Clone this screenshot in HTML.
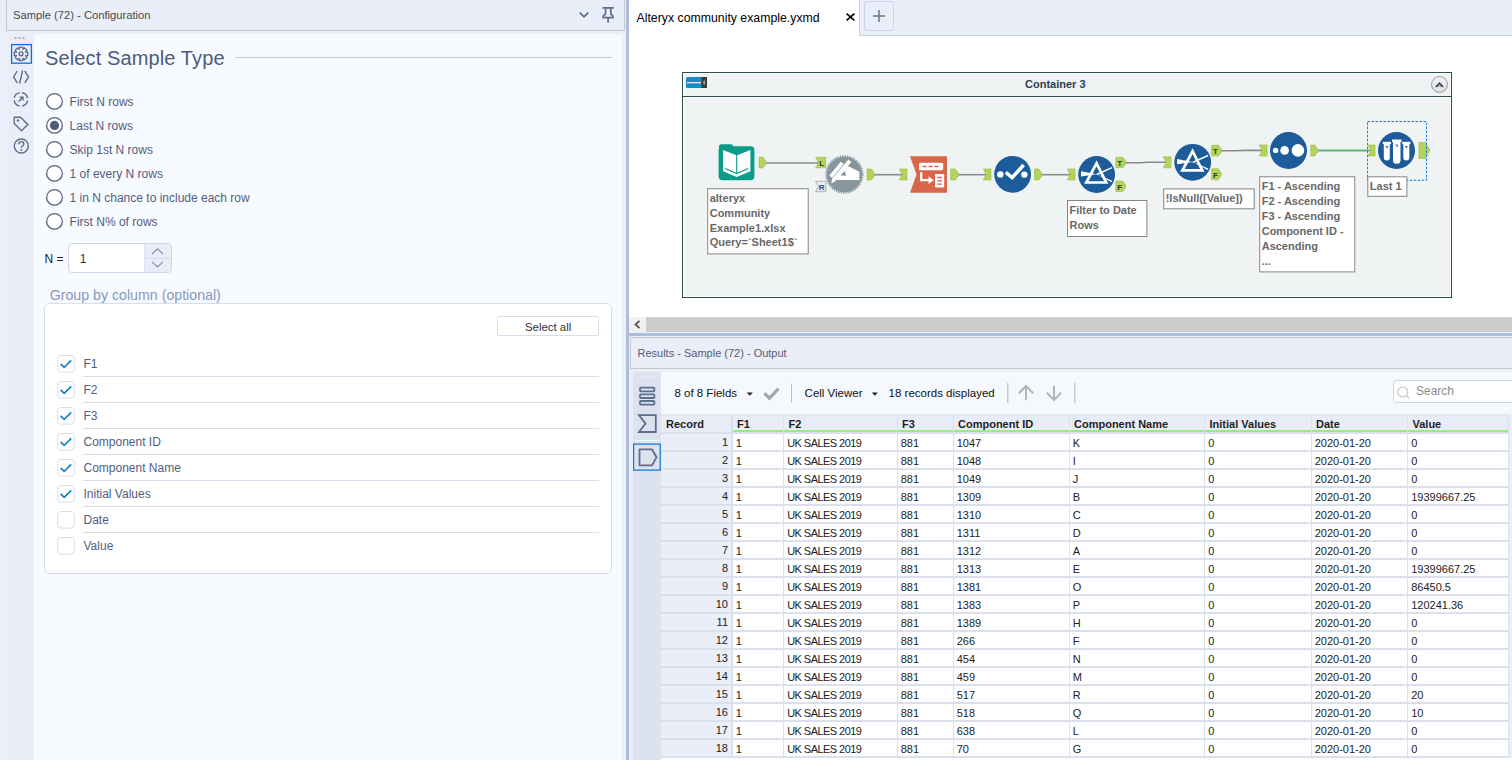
<!DOCTYPE html><html><head><meta charset="utf-8"><style>
html,body{margin:0;padding:0;width:1512px;height:760px;overflow:hidden;background:#e9eef8;font-family:"Liberation Sans",sans-serif;}
.t{position:absolute;white-space:nowrap;}
.r{position:absolute;box-sizing:border-box;}
svg{position:absolute;}
</style></head><body>

<div class="r" style="left:5px;top:31px;width:1px;height:729px;background:#f0f0f2;"></div>
<div class="r" style="left:6px;top:31px;width:28px;height:729px;background:#e9eef8;"></div>
<div class="r" style="left:33px;top:31px;width:1px;height:729px;background:#f0f0f2;"></div>
<div class="r" style="left:34px;top:34px;width:588px;height:726px;background:#f7faff;"></div>
<div class="r" style="left:622px;top:31px;width:4px;height:729px;background:#edf0f8;"></div>
<div class="r" style="left:6px;top:0px;width:619px;height:31px;background:#c8c8c8;"></div>
<div class="r" style="left:7px;top:0px;width:617px;height:30px;background:#e9eef8;"></div>
<div class="t" style="left:13.0px;top:9.00px;font-size:11.2px;line-height:12.88px;color:#4a4a4a;font-weight:400;">Sample (72) - Configuration</div>
<svg style="left:570px;top:0" width="56" height="30" viewBox="570 0 56 30"><polyline points="579.8,12.6 584,16.8 588.2,12.6" fill="none" stroke="#5f6e8c" stroke-width="1.8"/><path d="M602.5,7.8H613.8M605.5,8V13.8L603.2,16.2V17.6H613V16.2L610.8,13.8V8M608.1,17.6V22.7" fill="none" stroke="#5f6e8c" stroke-width="1.7"/></svg>
<svg style="left:6px;top:31px" width="28" height="130" viewBox="6 31 28 130"><g fill="#a8b0c0"><rect x="14.5" y="37" width="2" height="2"/><rect x="18.5" y="37" width="2" height="2"/><rect x="22.5" y="37" width="2" height="2"/></g><rect x="11.6" y="44.6" width="19.8" height="18.6" fill="none" stroke="#0b72d8" stroke-width="1.3"/><g fill="none" stroke="#5f6e8c" stroke-width="1.4"><path d="M25.62,51.76 L27.75,52.16 L27.75,55.44 L25.62,55.84 L25.72,55.59 L26.95,57.38 L24.63,59.70 L22.84,58.47 L23.09,58.37 L22.69,60.50 L19.41,60.50 L19.01,58.37 L19.26,58.47 L17.47,59.70 L15.15,57.38 L16.38,55.59 L16.48,55.84 L14.35,55.44 L14.35,52.16 L16.48,51.76 L16.38,52.01 L15.15,50.22 L17.47,47.90 L19.26,49.13 L19.01,49.23 L19.41,47.10 L22.69,47.10 L23.09,49.23 L22.84,49.13 L24.63,47.90 L26.95,50.22 L25.72,52.01Z" stroke-linejoin="round"/><circle cx="21.05" cy="53.8" r="1.9"/><path d="M17.2,71 13.6,76.9 17.2,82.8 M24.8,71 28.6,76.9 24.8,82.8 M22.6,70.5 19.6,83.5"/><circle cx="20.9" cy="99.4" r="6.8" stroke-dasharray="8.2 2.5" transform="rotate(-80 20.9 99.4)"/><path d="M18.6,101.6 22.8,97.4 M19.8,97.2 H23V100.4"/><path d="M14.2,117.2 H20.5 L27.8,124.5 21.5,130.8 14.2,123.5Z"/><circle cx="21.3" cy="146" r="7"/><path d="M18.8,144.2c0,-1.6 1.1,-2.6 2.5,-2.6s2.5,1 2.5,2.3c0,1.8 -2.4,1.9 -2.4,3.8"/></g><circle cx="18" cy="120.5" r="1.2" fill="#5f6e8c"/><circle cx="21.4" cy="150" r="1" fill="#5f6e8c"/></svg>
<div class="t" style="left:45.0px;top:47.00px;font-size:20px;line-height:23.00px;color:#4b5a7e;font-weight:400;letter-spacing:0.12px">Select Sample Type</div>
<div class="r" style="left:235px;top:57px;width:377px;height:1px;background:#c6c9cf;"></div>
<div class="t" style="left:69.6px;top:96.00px;font-size:12px;line-height:13.80px;color:#535d7e;font-weight:400;">First N rows</div>
<div class="t" style="left:69.6px;top:120.00px;font-size:12px;line-height:13.80px;color:#535d7e;font-weight:400;">Last N rows</div>
<div class="t" style="left:69.6px;top:144.00px;font-size:12px;line-height:13.80px;color:#535d7e;font-weight:400;">Skip 1st N rows</div>
<div class="t" style="left:69.6px;top:168.00px;font-size:12px;line-height:13.80px;color:#535d7e;font-weight:400;">1 of every N rows</div>
<div class="t" style="left:69.6px;top:192.00px;font-size:12px;line-height:13.80px;color:#535d7e;font-weight:400;">1 in N chance to include each row</div>
<div class="t" style="left:69.6px;top:216.00px;font-size:12px;line-height:13.80px;color:#535d7e;font-weight:400;">First N% of rows</div>
<svg style="left:40px;top:88px" width="30" height="145" viewBox="40 88 30 145"><circle cx="54.5" cy="101.4" r="7.8" fill="#fff" stroke="#56617c" stroke-width="1.3"/><circle cx="54.5" cy="125.4" r="7.8" fill="#fff" stroke="#56617c" stroke-width="1.3"/><circle cx="54.5" cy="125.4" r="4.6" fill="#4b5a7e"/><circle cx="54.5" cy="149.4" r="7.8" fill="#fff" stroke="#56617c" stroke-width="1.3"/><circle cx="54.5" cy="173.4" r="7.8" fill="#fff" stroke="#56617c" stroke-width="1.3"/><circle cx="54.5" cy="197.4" r="7.8" fill="#fff" stroke="#56617c" stroke-width="1.3"/><circle cx="54.5" cy="221.4" r="7.8" fill="#fff" stroke="#56617c" stroke-width="1.3"/></svg>
<div class="t" style="left:44.4px;top:253.00px;font-size:12px;line-height:13.80px;color:#222;font-weight:400;">N =</div>
<div class="r" style="left:68px;top:243px;width:104px;height:30px;border:1px solid #cfd8ea;border-radius:4px;background:#fff;overflow:hidden"><div class="r" style="left:75px;top:0;width:28px;height:28px;background:#e8edf7;border-left:1px solid #dde4f0"></div><div class="r" style="left:75px;top:14px;width:28px;height:1px;background:#d5dcea"></div></div>
<div class="t" style="left:79.7px;top:253.00px;font-size:12px;line-height:13.80px;color:#333;font-weight:400;">1</div>
<svg style="left:144px;top:244px" width="28" height="28" viewBox="144 244 28 28"><polyline points="152,254 157.5,248.8 163,254" fill="none" stroke="#8190ad" stroke-width="1.1"/><polyline points="152,261.8 157.5,267 163,261.8" fill="none" stroke="#8190ad" stroke-width="1.1"/></svg>
<div class="t" style="left:49.7px;top:287.00px;font-size:14.2px;line-height:16.33px;color:#8798bd;font-weight:400;">Group by column (optional)</div>
<div class="r" style="left:44px;top:303px;width:568px;height:271px;border:1px solid #d6deed;border-radius:5px;background:#fff"></div>
<div class="r" style="left:497px;top:316px;width:102px;height:20px;border:1px solid #d6deed;border-radius:2px;background:#fff"></div>
<div class="t" style="left:525.0px;top:321.00px;font-size:11.4px;line-height:13.11px;color:#333;font-weight:400;">Select all</div>
<div class="t" style="left:83.5px;top:358.00px;font-size:12px;line-height:13.80px;color:#535d7e;font-weight:400;">F1</div>
<div class="r" style="left:83px;top:376px;width:516px;height:1px;background:#d6deed;"></div>
<div class="t" style="left:83.5px;top:384.00px;font-size:12px;line-height:13.80px;color:#535d7e;font-weight:400;">F2</div>
<div class="r" style="left:83px;top:402px;width:516px;height:1px;background:#d6deed;"></div>
<div class="t" style="left:83.5px;top:410.00px;font-size:12px;line-height:13.80px;color:#535d7e;font-weight:400;">F3</div>
<div class="r" style="left:83px;top:428px;width:516px;height:1px;background:#d6deed;"></div>
<div class="t" style="left:83.5px;top:436.00px;font-size:12px;line-height:13.80px;color:#535d7e;font-weight:400;">Component ID</div>
<div class="r" style="left:83px;top:454px;width:516px;height:1px;background:#d6deed;"></div>
<div class="t" style="left:83.5px;top:462.00px;font-size:12px;line-height:13.80px;color:#535d7e;font-weight:400;">Component Name</div>
<div class="r" style="left:83px;top:480px;width:516px;height:1px;background:#d6deed;"></div>
<div class="t" style="left:83.5px;top:488.00px;font-size:12px;line-height:13.80px;color:#535d7e;font-weight:400;">Initial Values</div>
<div class="r" style="left:83px;top:506px;width:516px;height:1px;background:#d6deed;"></div>
<div class="t" style="left:83.5px;top:514.00px;font-size:12px;line-height:13.80px;color:#535d7e;font-weight:400;">Date</div>
<div class="r" style="left:83px;top:532px;width:516px;height:1px;background:#d6deed;"></div>
<div class="t" style="left:83.5px;top:540.00px;font-size:12px;line-height:13.80px;color:#535d7e;font-weight:400;">Value</div>
<svg style="left:50px;top:350px" width="30" height="210" viewBox="50 350 30 210"><rect x="57.7" y="355.5" width="16.6" height="16.6" rx="3" fill="#fff" stroke="#d6deed" stroke-width="1"/><polyline points="60.6,363.8 64.2,367.4 71.2,360.4" fill="none" stroke="#1a7fc8" stroke-width="1.7"/><rect x="57.7" y="381.5" width="16.6" height="16.6" rx="3" fill="#fff" stroke="#d6deed" stroke-width="1"/><polyline points="60.6,389.8 64.2,393.4 71.2,386.4" fill="none" stroke="#1a7fc8" stroke-width="1.7"/><rect x="57.7" y="407.5" width="16.6" height="16.6" rx="3" fill="#fff" stroke="#d6deed" stroke-width="1"/><polyline points="60.6,415.8 64.2,419.4 71.2,412.4" fill="none" stroke="#1a7fc8" stroke-width="1.7"/><rect x="57.7" y="433.5" width="16.6" height="16.6" rx="3" fill="#fff" stroke="#d6deed" stroke-width="1"/><polyline points="60.6,441.8 64.2,445.4 71.2,438.4" fill="none" stroke="#1a7fc8" stroke-width="1.7"/><rect x="57.7" y="459.5" width="16.6" height="16.6" rx="3" fill="#fff" stroke="#d6deed" stroke-width="1"/><polyline points="60.6,467.8 64.2,471.4 71.2,464.4" fill="none" stroke="#1a7fc8" stroke-width="1.7"/><rect x="57.7" y="485.5" width="16.6" height="16.6" rx="3" fill="#fff" stroke="#d6deed" stroke-width="1"/><polyline points="60.6,493.8 64.2,497.4 71.2,490.4" fill="none" stroke="#1a7fc8" stroke-width="1.7"/><rect x="57.7" y="511.5" width="16.6" height="16.6" rx="3" fill="#fff" stroke="#d6deed" stroke-width="1"/><rect x="57.7" y="537.5" width="16.6" height="16.6" rx="3" fill="#fff" stroke="#d6deed" stroke-width="1"/></svg>
<div class="r" style="left:625px;top:31px;width:1px;height:729px;background:#f2f2f4;"></div>
<div class="r" style="left:626px;top:0px;width:3px;height:760px;background:#adbde0;"></div>
<div class="r" style="left:629px;top:0px;width:883px;height:317px;background:#ffffff;"></div>
<div class="r" style="left:859px;top:0px;width:653px;height:36px;background:#c8d3e8;"></div>
<div class="r" style="left:860px;top:0px;width:652px;height:35px;background:#e9eef8;"></div>
<div class="t" style="left:636.5px;top:11.00px;font-size:12.3px;line-height:14.14px;color:#000;font-weight:400;">Alteryx community example.yxmd</div>
<svg style="left:840px;top:8px" width="20" height="20" viewBox="840 8 20 20"><path d="M846.6,13.6 854.4,20.4 M854.4,13.6 846.6,20.4" stroke="#000" stroke-width="1.7" fill="none"/></svg>
<div class="r" style="left:864px;top:1px;width:30px;height:30px;border:1px solid #cbd5e8;border-radius:3px;background:#e9eef8"></div>
<svg style="left:864px;top:1px" width="30" height="30" viewBox="864 1 30 30"><path d="M873,16H885M879,10V22" stroke="#6a7690" stroke-width="1.5" fill="none"/></svg>
<div class="r" style="left:682px;top:72px;width:770px;height:226px;border:1px solid #2f4b4b;background:#eff3f4;box-shadow:inset 0 0 0 1px #fff"></div>
<div class="r" style="left:683px;top:96px;width:768px;height:1px;background:#2f4b4b;"></div>
<div class="r" style="left:683px;top:97px;width:768px;height:1px;background:#fff;"></div>
<div class="t" style="left:1025.0px;top:78.00px;font-size:11px;line-height:12.65px;color:#2b3f52;font-weight:700;">Container 3</div>
<svg style="left:684px;top:74px" width="30" height="20" viewBox="684 74 30 20"><rect x="686" y="77" width="21" height="11" rx="1.5" fill="#1a8ac6"/><rect x="701.5" y="77" width="5.5" height="11" fill="#3a3a3a"/><rect x="687" y="82" width="14" height="1.3" fill="#e8e8e8"/><path d="M704.2,79.5 705.2,82.5 704.2,85.5 703.2,82.5z" fill="#aaa"/></svg>
<svg style="left:1428px;top:74px" width="22" height="22" viewBox="1428 74 22 22"><defs><linearGradient id="cg" x1="0" y1="0" x2="0" y2="1"><stop offset="0" stop-color="#f4f5f8"/><stop offset="1" stop-color="#d9dde6"/></linearGradient></defs><circle cx="1439.5" cy="84.5" r="8" fill="url(#cg)" stroke="#9a9a9a" stroke-width="1"/><path d="M1435.9,87 1439.5,83 1443.1,87" stroke="#333" stroke-width="1.2" fill="none"/><path d="M1437.6,86.9 1439.5,84.9 1441.4,86.9" stroke="#555" stroke-width="1" fill="none"/></svg>
<svg style="left:629px;top:98px" width="830" height="199" viewBox="629 98 830 199"><path d="M766,163H819" stroke="#8a8a8a" stroke-width="1.6" fill="none"/><path d="M874,174.7H902" stroke="#8a8a8a" stroke-width="1.6" fill="none"/><path d="M958,174.7H986" stroke="#8a8a8a" stroke-width="1.6" fill="none"/><path d="M1042,174.7H1070" stroke="#8a8a8a" stroke-width="1.6" fill="none"/><path d="M1125,162.8H1140L1148,162.3H1166" stroke="#8a8a8a" stroke-width="1.6" fill="none"/><path d="M1221,150.8H1236L1244,150.4H1262" stroke="#8a8a8a" stroke-width="1.6" fill="none"/><path d="M1318,150.4H1371" stroke="#5cb870" stroke-width="2" fill="none"/><rect x="719" y="144.3" width="14" height="6" rx="2" fill="#0a9c8b"/><rect x="718.6" y="146.2" width="35.8" height="34" rx="4" fill="#0a9c8b"/><path d="M723.1,150 736.3,155.3H737.1L750.4,150V171.2L736.7,177L723.1,171.2Z" fill="#fff"/><path d="M736.7,155V173.6M725.3,168.6 736.7,173.6 748.2,168.6" stroke="#0a9c8b" stroke-width="1.1" fill="none"/><path d="M759,157.0H762.8L765.6,160.7Q766,162.5 765.6,164.3L762.8,168.0H759Z" fill="#b4d35a" stroke="#98b843" stroke-width="0.6"/><path d="M815.6,157.2H825.8V167.8H815.6L818.6,162.5Z" fill="#b4d35a" stroke="#98b843" stroke-width="0.6"/><text x="821.7" y="166.1" font-size="8" font-weight="700" text-anchor="middle" fill="#24402a" font-family="Liberation Sans">L</text><path d="M815.6,181.3H825.8V191.7H815.6L818.6,186.5Z" fill="#eeeeee" stroke="#8a8a8a" stroke-width="0.6"/><text x="821.7" y="190.1" font-size="8" font-weight="700" text-anchor="middle" fill="#1d4f8a" font-family="Liberation Sans">R</text><circle cx="844.4" cy="174.5" r="17.8" fill="#87969c"/><circle cx="844.4" cy="174.5" r="18.4" fill="none" stroke="#87969c" stroke-width="1.6" stroke-dasharray="1.3 1.1"/><path d="M831.2,183.5 832.2,178.8 848.3,159.6 851.3,162.1 835.2,181.3Z" fill="#fff"/><path d="M829.3,175.6 840.8,161.8 843.6,164.1 832.1,177.9Z" fill="#fff"/><path d="M837,176.3 847.9,166.1 859.4,171.7V179.9H837Z" fill="#fff"/><path d="M840.5,175.5 844.5,171 846.2,175.8Z" fill="#87969c"/><path d="M867,169.0H871.3L874.1,172.7Q874.5,174.5 874.1,176.3L871.3,180.0H867Z" fill="#b4d35a" stroke="#98b843" stroke-width="0.6"/><path d="M899.3,169.0H907V180.0H899.3L902.3,174.5Z" fill="#b4d35a" stroke="#98b843" stroke-width="0.6"/><path d="M910,156.3H947V192.7H910L916.5,174.5Z" fill="#d9654b"/><rect x="919" y="162.8" width="24.2" height="7.4" rx="1.5" fill="#fff"/><path d="M922.6,166.5h4M928.6,166.5h4M934.6,166.5h4" stroke="#d9654b" stroke-width="1.6"/><path d="M921.2,172.2V180.2H929" stroke="#fff" stroke-width="2.2" fill="none"/><path d="M928.5,176.3 933.6,180.2 928.5,184.1Z" fill="#fff"/><rect x="935" y="173.9" width="9.2" height="13.7" rx="1.3" fill="#fff"/><path d="M937.2,177.5h4.8M937.2,180.8h4.8M937.2,184.1h4.8" stroke="#d9654b" stroke-width="1.3"/><path d="M950.7,169.0H955.3L958.1,172.7Q958.5,174.5 958.1,176.3L955.3,180.0H950.7Z" fill="#b4d35a" stroke="#98b843" stroke-width="0.6"/><path d="M983.2,169.0H991V180.0H983.2L986.2,174.5Z" fill="#b4d35a" stroke="#98b843" stroke-width="0.6"/><circle cx="1012.6" cy="174.3" r="18.4" fill="#1d5c9a"/><circle cx="1000.3" cy="174.4" r="3.2" fill="#fff"/><circle cx="1024.4" cy="174.6" r="3.2" fill="#fff"/><path d="M1005.8,172.3 1012.2,177.6 1023.6,165" stroke="#fff" stroke-width="3.6" fill="none"/><path d="M1034.5,169.0H1038.8L1041.6,172.7Q1042,174.5 1041.6,176.3L1038.8,180.0H1034.5Z" fill="#b4d35a" stroke="#98b843" stroke-width="0.6"/><path d="M1067.2,169.0H1075V180.0H1067.2L1070.2,174.5Z" fill="#b4d35a" stroke="#98b843" stroke-width="0.6"/><circle cx="1096.6" cy="174.5" r="18.4" fill="#1d5c9a"/><path d="M1096.5,163.3 L1086.3,182.5 H1106.1999999999998Z" fill="none" stroke="#fff" stroke-width="2.7" stroke-linejoin="miter" stroke-miterlimit="10"/><path d="M1081.0,171.2 L1096.5,174.3 L1081.0,176.5Z" fill="#fff"/><path d="M1096.6,174.5 L1112.0,167.7" stroke="#fff" stroke-width="1.4" fill="none"/><path d="M1096.6,174.2 L1112.1999999999998,180.7 L1111.6,182.3Z" fill="#fff"/><path d="M1115.8,157.3H1122.7L1125.5,160.7Q1125.9,162.5 1125.5,164.3L1122.7,167.7H1115.8Z" fill="#b4d35a" stroke="#98b843" stroke-width="0.6"/><text x="1119.8" y="166.1" font-size="8" font-weight="700" text-anchor="middle" fill="#24402a" font-family="Liberation Sans">T</text><path d="M1115.8,181.0H1122.7L1125.5,184.5Q1125.9,186.3 1125.5,188.10000000000002L1122.7,191.60000000000002H1115.8Z" fill="#b4d35a" stroke="#98b843" stroke-width="0.6"/><text x="1119.8" y="189.9" font-size="8" font-weight="700" text-anchor="middle" fill="#24402a" font-family="Liberation Sans">F</text><rect x="1067.5" y="200.5" width="79.40000000000009" height="36" fill="#fff" stroke="#858585" stroke-width="1"/><text x="1069.5" y="213.8" font-size="11" font-weight="700" fill="#686868" font-family="Liberation Sans">Filter to Date</text><text x="1069.5" y="228.6" font-size="11" font-weight="700" fill="#686868" font-family="Liberation Sans">Rows</text><path d="M1163.2,156.8H1171V167.8H1163.2L1166.2,162.3Z" fill="#b4d35a" stroke="#98b843" stroke-width="0.6"/><circle cx="1192.7" cy="162.3" r="18.4" fill="#1d5c9a"/><path d="M1192.6000000000001,151.10000000000002 L1182.4,170.3 H1202.3Z" fill="none" stroke="#fff" stroke-width="2.7" stroke-linejoin="miter" stroke-miterlimit="10"/><path d="M1177.1000000000001,159.0 L1192.6000000000001,162.10000000000002 L1177.1000000000001,164.3Z" fill="#fff"/><path d="M1192.7,162.3 L1208.1000000000001,155.5" stroke="#fff" stroke-width="1.4" fill="none"/><path d="M1192.7,162.0 L1208.3,168.5 L1207.7,170.10000000000002Z" fill="#fff"/><path d="M1211.6,145.29999999999998H1218.3L1221.1,148.79999999999998Q1221.5,150.6 1221.1,152.4L1218.3,155.9H1211.6Z" fill="#b4d35a" stroke="#98b843" stroke-width="0.6"/><text x="1215.4" y="154.2" font-size="8" font-weight="700" text-anchor="middle" fill="#24402a" font-family="Liberation Sans">T</text><path d="M1211.6,168.8H1218.3L1221.1,172.5Q1221.5,174.3 1221.1,176.10000000000002L1218.3,179.8H1211.6Z" fill="#b4d35a" stroke="#98b843" stroke-width="0.6"/><text x="1215.4" y="177.9" font-size="8" font-weight="700" text-anchor="middle" fill="#24402a" font-family="Liberation Sans">F</text><rect x="1163.7" y="188.9" width="90.5" height="19.900000000000006" fill="#fff" stroke="#858585" stroke-width="1"/><text x="1165.7" y="201.8" font-size="11" font-weight="700" fill="#686868" font-family="Liberation Sans">!IsNull([Value])</text><path d="M1259.2,145.0H1267.1V156.0H1259.2L1262.2,150.5Z" fill="#b4d35a" stroke="#98b843" stroke-width="0.6"/><circle cx="1288.5" cy="150.5" r="18.5" fill="#1d5c9a"/><circle cx="1275.6" cy="150.4" r="2.7" fill="#fff"/><circle cx="1284.6" cy="150.4" r="4.3" fill="#fff"/><circle cx="1297.9" cy="150.4" r="6.3" fill="#fff"/><path d="M1310.8,145.0H1314.7L1317.5,148.7Q1317.9,150.5 1317.5,152.3L1314.7,156.0H1310.8Z" fill="#b4d35a" stroke="#98b843" stroke-width="0.6"/><rect x="1259.7" y="176.8" width="95.09999999999991" height="95.09999999999997" fill="#fff" stroke="#858585" stroke-width="1"/><text x="1261.7" y="190.3" font-size="11" font-weight="700" fill="#686868" font-family="Liberation Sans">F1 - Ascending</text><text x="1261.7" y="205.3" font-size="11" font-weight="700" fill="#686868" font-family="Liberation Sans">F2 - Ascending</text><text x="1261.7" y="220.3" font-size="11" font-weight="700" fill="#686868" font-family="Liberation Sans">F3 - Ascending</text><text x="1261.7" y="235.3" font-size="11" font-weight="700" fill="#686868" font-family="Liberation Sans">Component ID -</text><text x="1261.7" y="250.3" font-size="11" font-weight="700" fill="#686868" font-family="Liberation Sans">Ascending</text><text x="1261.7" y="265.3" font-size="11" font-weight="700" fill="#686868" font-family="Liberation Sans">...</text><path d="M1367.9,145.0H1375V156.0H1367.9L1370.9,150.5Z" fill="#b4d35a" stroke="#98b843" stroke-width="0.6"/><circle cx="1396.5" cy="150.5" r="18.5" fill="#1d5c9a"/><g fill="#fff"><rect x="1382.8" y="141.8" width="8.2" height="2.4"/><rect x="1383.8" y="142" width="6" height="18.6" rx="3"/><rect x="1392" y="139.5" width="9.5" height="2.6"/><rect x="1393" y="140" width="7.5" height="23.8" rx="3.5"/><rect x="1402.2" y="141.8" width="8.2" height="2.4"/><rect x="1403.3" y="142" width="6" height="18.6" rx="3"/></g><path d="M1385.5,146.5h2.2l-1,2M1395.3,145h2.5l-1,2.2M1405,146.5h2.2l-1,2" stroke="#1d5c9a" stroke-width="0.9" fill="none"/><path d="M1418.9,142.4H1425.5L1429.8,150.5L1425.5,158.5H1418.9Z" fill="#b4d35a" stroke="#98b843" stroke-width="0.6"/><rect x="1367.5" y="121.5" width="59" height="58.8" fill="none" stroke="#1a7fd8" stroke-width="1" stroke-dasharray="2.5 1.5"/><rect x="1367.8" y="176.8" width="39.100000000000136" height="19.5" fill="#fff" stroke="#858585" stroke-width="1"/><text x="1369.8" y="190.1" font-size="11" font-weight="700" fill="#686868" font-family="Liberation Sans">Last 1</text><rect x="707.7" y="188.7" width="100.5" height="65.20000000000002" fill="#fff" stroke="#858585" stroke-width="1"/><text x="709.7" y="201.9" font-size="11" font-weight="700" fill="#686868" font-family="Liberation Sans">alteryx</text><text x="709.7" y="216.7" font-size="11" font-weight="700" fill="#686868" font-family="Liberation Sans">Community</text><text x="709.7" y="231.6" font-size="11" font-weight="700" fill="#686868" font-family="Liberation Sans">Example1.xlsx</text><text x="709.7" y="246.4" font-size="11" font-weight="700" fill="#686868" font-family="Liberation Sans">Query=`Sheet1$`</text></svg>
<div class="r" style="left:629px;top:317px;width:17px;height:15px;background:#f0f0f0;"></div>
<div class="r" style="left:646px;top:317px;width:866px;height:15px;background:#cdcdcd;"></div>
<div class="r" style="left:629px;top:332px;width:883px;height:1px;background:#f0f0f0;"></div>
<svg style="left:629px;top:317px" width="17" height="15" viewBox="629 317 17 15"><polyline points="639.5,320.8 635.5,324.5 639.5,328.2" fill="none" stroke="#555" stroke-width="1.8"/></svg>
<div class="r" style="left:629px;top:333px;width:883px;height:3px;background:#adbde0;"></div>
<div class="r" style="left:629px;top:336px;width:883px;height:424px;background:#e9eef8;"></div>
<div class="r" style="left:629px;top:369px;width:1px;height:391px;background:#ececf0;"></div>
<div class="r" style="left:630px;top:337px;width:882px;height:32px;background:#c8c8c8;"></div>
<div class="r" style="left:631px;top:338px;width:881px;height:30px;background:#e9eef8;"></div>
<div class="t" style="left:637.5px;top:347.00px;font-size:11px;line-height:12.65px;color:#5a5a6e;font-weight:400;">Results - Sample (72) - Output</div>
<div class="r" style="left:633px;top:372px;width:28px;height:388px;background:#dce2ee;border-radius:4px 0 0 0"></div>
<div class="r" style="left:661px;top:372px;width:851px;height:41px;background:#f5f8fd;"></div>
<div class="r" style="left:661px;top:413px;width:851px;height:2px;background:#eef1f6;"></div>
<svg style="left:633px;top:372px" width="28" height="110" viewBox="633 372 28 110"><g fill="#eef1f7"><rect x="636.5" y="376" width="1.6" height="1.6"/><rect x="640.3" y="376" width="1.6" height="1.6"/><rect x="644.1" y="376" width="1.6" height="1.6"/><rect x="647.9" y="376" width="1.6" height="1.6"/><rect x="651.7" y="376" width="1.6" height="1.6"/></g><g fill="none" stroke="#5f6e8c" stroke-width="1.8"><rect x="640" y="387.7" width="14.4" height="3.6" rx="0.8"/><rect x="640" y="394.4" width="14.4" height="3.6" rx="0.8"/><rect x="640" y="401" width="14.4" height="3.6" rx="0.8"/><path d="M639,415.2H655.8V432H639L645.5,423.6Z"/><path d="M639.5,449.3H652L656.5,457.3L652,465.4H639.5Z" stroke-linejoin="round"/></g><rect x="635" y="440" width="24" height="1.2" fill="#f5f7fb"/><rect x="633.6" y="444.1" width="26.6" height="26" fill="none" stroke="#0b72d8" stroke-width="1.2"/></svg>
<div class="t" style="left:674.4px;top:387.00px;font-size:11.5px;line-height:13.22px;color:#111;font-weight:400;">8 of 8 Fields</div>
<div class="t" style="left:804.6px;top:387.00px;font-size:11.5px;line-height:13.22px;color:#111;font-weight:400;">Cell Viewer</div>
<div class="t" style="left:888.6px;top:387.00px;font-size:11.5px;line-height:13.22px;color:#111;font-weight:400;">18 records displayed</div>
<svg style="left:740px;top:380px" width="340" height="26" viewBox="740 380 340 26"><path d="M746.8,392.5h6l-3,3.3z M871.8,392.5h6l-3,3.3z" fill="#222"/><path d="M764.4,393.3 769.4,398.2 778.6,388.6" stroke="#a8a8a8" stroke-width="3.3" fill="none"/><rect x="791" y="383.5" width="1" height="19" fill="#bdbdbd"/><rect x="1007.2" y="383" width="1.2" height="20" fill="#bdbdbd"/><rect x="1074.2" y="383" width="1.2" height="20" fill="#bdbdbd"/><path d="M1026,400.3V386.5M1018.8,393.2 1026,386 1033.2,393.2 M1054,385.8V400M1046.8,392.8 1054,400 1061.2,392.8" stroke="#b4b4b4" stroke-width="2" fill="none"/></svg>
<div class="r" style="left:1393px;top:380px;width:130px;height:23px;border:1px solid #cbd3e2;border-radius:4px;background:#fff"></div>
<svg style="left:1393px;top:380px" width="24" height="23" viewBox="1393 380 24 23"><circle cx="1402.8" cy="392" r="5" fill="none" stroke="#c3c7cf" stroke-width="1.2"/><path d="M1406.3,395.5 1409,398.3" stroke="#c3c7cf" stroke-width="1.3"/></svg>
<div class="t" style="left:1416.0px;top:385.00px;font-size:12px;line-height:13.80px;color:#8c8c8c;font-weight:400;">Search</div>
<div class="r" style="left:661px;top:415px;width:848px;height:343px;background:#dbe1ec;"></div>
<div class="r" style="left:661px;top:415.5px;width:70px;height:16.5px;background:#e8ecf6;"></div>
<div class="t" style="left:666.0px;top:418.00px;font-size:11px;line-height:12.65px;color:#1e1e1e;font-weight:700;">Record</div>
<div class="r" style="left:732.5px;top:415.5px;width:50.0px;height:14.5px;background:#e8ecf6;"></div>
<div class="r" style="left:732.5px;top:430px;width:50.0px;height:2px;background:#92f276;"></div>
<div class="t" style="left:737.0px;top:418.00px;font-size:11px;line-height:12.65px;color:#1e1e1e;font-weight:700;">F1</div>
<div class="r" style="left:784px;top:415.5px;width:112.5px;height:14.5px;background:#e8ecf6;"></div>
<div class="r" style="left:784px;top:430px;width:112.5px;height:2px;background:#92f276;"></div>
<div class="t" style="left:788.5px;top:418.00px;font-size:11px;line-height:12.65px;color:#1e1e1e;font-weight:700;">F2</div>
<div class="r" style="left:897.5px;top:415.5px;width:55.0px;height:14.5px;background:#e8ecf6;"></div>
<div class="r" style="left:897.5px;top:430px;width:55.0px;height:2px;background:#92f276;"></div>
<div class="t" style="left:902.0px;top:418.00px;font-size:11px;line-height:12.65px;color:#1e1e1e;font-weight:700;">F3</div>
<div class="r" style="left:953.5px;top:415.5px;width:115.0px;height:14.5px;background:#e8ecf6;"></div>
<div class="r" style="left:953.5px;top:430px;width:115.0px;height:2px;background:#92f276;"></div>
<div class="t" style="left:958.0px;top:418.00px;font-size:11px;line-height:12.65px;color:#1e1e1e;font-weight:700;">Component ID</div>
<div class="r" style="left:1069.5px;top:415.5px;width:134.5px;height:14.5px;background:#e8ecf6;"></div>
<div class="r" style="left:1069.5px;top:430px;width:134.5px;height:2px;background:#92f276;"></div>
<div class="t" style="left:1074.0px;top:418.00px;font-size:11px;line-height:12.65px;color:#1e1e1e;font-weight:700;">Component Name</div>
<div class="r" style="left:1205px;top:415.5px;width:105.5px;height:14.5px;background:#e8ecf6;"></div>
<div class="r" style="left:1205px;top:430px;width:105.5px;height:2px;background:#92f276;"></div>
<div class="t" style="left:1209.5px;top:418.00px;font-size:11px;line-height:12.65px;color:#1e1e1e;font-weight:700;">Initial Values</div>
<div class="r" style="left:1311.5px;top:415.5px;width:95.5px;height:14.5px;background:#e8ecf6;"></div>
<div class="r" style="left:1311.5px;top:430px;width:95.5px;height:2px;background:#92f276;"></div>
<div class="t" style="left:1316.0px;top:418.00px;font-size:11px;line-height:12.65px;color:#1e1e1e;font-weight:700;">Date</div>
<div class="r" style="left:1408px;top:415.5px;width:100px;height:14.5px;background:#e8ecf6;"></div>
<div class="r" style="left:1408px;top:430px;width:100px;height:2px;background:#92f276;"></div>
<div class="t" style="left:1412.5px;top:418.00px;font-size:11px;line-height:12.65px;color:#1e1e1e;font-weight:700;">Value</div>
<div class="r" style="left:661px;top:434px;width:70px;height:16.19999999999999px;background:#e9eef8;"></div>
<div class="r" style="left:732.5px;top:434px;width:50.0px;height:16.19999999999999px;background:#fff;"></div>
<div class="r" style="left:784px;top:434px;width:112.5px;height:16.19999999999999px;background:#fff;"></div>
<div class="r" style="left:897.5px;top:434px;width:55.0px;height:16.19999999999999px;background:#fff;"></div>
<div class="r" style="left:953.5px;top:434px;width:115.0px;height:16.19999999999999px;background:#fff;"></div>
<div class="r" style="left:1069.5px;top:434px;width:134.5px;height:16.19999999999999px;background:#fff;"></div>
<div class="r" style="left:1205px;top:434px;width:105.5px;height:16.19999999999999px;background:#fff;"></div>
<div class="r" style="left:1311.5px;top:434px;width:95.5px;height:16.19999999999999px;background:#fff;"></div>
<div class="r" style="left:1408px;top:434px;width:100px;height:16.19999999999999px;background:#fff;"></div>
<div class="t" style="left:661px;top:436px;width:67px;text-align:right;font-size:11px;line-height:12.65px;color:#222">1</div>
<div class="t" style="left:735.7px;top:437.00px;font-size:11px;line-height:12.65px;color:#222;font-weight:400;">1</div>
<div class="t" style="left:787.2px;top:437.00px;font-size:11px;line-height:12.65px;color:#222;font-weight:400;letter-spacing:-0.55px">UK SALES 2019</div>
<div class="t" style="left:900.7px;top:437.00px;font-size:11px;line-height:12.65px;color:#222;font-weight:400;">881</div>
<div class="t" style="left:956.7px;top:437.00px;font-size:11px;line-height:12.65px;color:#222;font-weight:400;">1047</div>
<div class="t" style="left:1072.7px;top:437.00px;font-size:11px;line-height:12.65px;color:#222;font-weight:400;">K</div>
<div class="t" style="left:1208.2px;top:437.00px;font-size:11px;line-height:12.65px;color:#222;font-weight:400;">0</div>
<div class="t" style="left:1314.7px;top:437.00px;font-size:11px;line-height:12.65px;color:#222;font-weight:400;">2020-01-20</div>
<div class="t" style="left:1411.2px;top:437.00px;font-size:11px;line-height:12.65px;color:#222;font-weight:400;">0</div>
<div class="r" style="left:661px;top:452px;width:70px;height:16.19999999999999px;background:#e9eef8;"></div>
<div class="r" style="left:732.5px;top:452px;width:50.0px;height:16.19999999999999px;background:#fff;"></div>
<div class="r" style="left:784px;top:452px;width:112.5px;height:16.19999999999999px;background:#fff;"></div>
<div class="r" style="left:897.5px;top:452px;width:55.0px;height:16.19999999999999px;background:#fff;"></div>
<div class="r" style="left:953.5px;top:452px;width:115.0px;height:16.19999999999999px;background:#fff;"></div>
<div class="r" style="left:1069.5px;top:452px;width:134.5px;height:16.19999999999999px;background:#fff;"></div>
<div class="r" style="left:1205px;top:452px;width:105.5px;height:16.19999999999999px;background:#fff;"></div>
<div class="r" style="left:1311.5px;top:452px;width:95.5px;height:16.19999999999999px;background:#fff;"></div>
<div class="r" style="left:1408px;top:452px;width:100px;height:16.19999999999999px;background:#fff;"></div>
<div class="t" style="left:661px;top:454px;width:67px;text-align:right;font-size:11px;line-height:12.65px;color:#222">2</div>
<div class="t" style="left:735.7px;top:455.00px;font-size:11px;line-height:12.65px;color:#222;font-weight:400;">1</div>
<div class="t" style="left:787.2px;top:455.00px;font-size:11px;line-height:12.65px;color:#222;font-weight:400;letter-spacing:-0.55px">UK SALES 2019</div>
<div class="t" style="left:900.7px;top:455.00px;font-size:11px;line-height:12.65px;color:#222;font-weight:400;">881</div>
<div class="t" style="left:956.7px;top:455.00px;font-size:11px;line-height:12.65px;color:#222;font-weight:400;">1048</div>
<div class="t" style="left:1072.7px;top:455.00px;font-size:11px;line-height:12.65px;color:#222;font-weight:400;">I</div>
<div class="t" style="left:1208.2px;top:455.00px;font-size:11px;line-height:12.65px;color:#222;font-weight:400;">0</div>
<div class="t" style="left:1314.7px;top:455.00px;font-size:11px;line-height:12.65px;color:#222;font-weight:400;">2020-01-20</div>
<div class="t" style="left:1411.2px;top:455.00px;font-size:11px;line-height:12.65px;color:#222;font-weight:400;">0</div>
<div class="r" style="left:661px;top:470px;width:70px;height:16.19999999999999px;background:#e9eef8;"></div>
<div class="r" style="left:732.5px;top:470px;width:50.0px;height:16.19999999999999px;background:#fff;"></div>
<div class="r" style="left:784px;top:470px;width:112.5px;height:16.19999999999999px;background:#fff;"></div>
<div class="r" style="left:897.5px;top:470px;width:55.0px;height:16.19999999999999px;background:#fff;"></div>
<div class="r" style="left:953.5px;top:470px;width:115.0px;height:16.19999999999999px;background:#fff;"></div>
<div class="r" style="left:1069.5px;top:470px;width:134.5px;height:16.19999999999999px;background:#fff;"></div>
<div class="r" style="left:1205px;top:470px;width:105.5px;height:16.19999999999999px;background:#fff;"></div>
<div class="r" style="left:1311.5px;top:470px;width:95.5px;height:16.19999999999999px;background:#fff;"></div>
<div class="r" style="left:1408px;top:470px;width:100px;height:16.19999999999999px;background:#fff;"></div>
<div class="t" style="left:661px;top:472px;width:67px;text-align:right;font-size:11px;line-height:12.65px;color:#222">3</div>
<div class="t" style="left:735.7px;top:473.00px;font-size:11px;line-height:12.65px;color:#222;font-weight:400;">1</div>
<div class="t" style="left:787.2px;top:473.00px;font-size:11px;line-height:12.65px;color:#222;font-weight:400;letter-spacing:-0.55px">UK SALES 2019</div>
<div class="t" style="left:900.7px;top:473.00px;font-size:11px;line-height:12.65px;color:#222;font-weight:400;">881</div>
<div class="t" style="left:956.7px;top:473.00px;font-size:11px;line-height:12.65px;color:#222;font-weight:400;">1049</div>
<div class="t" style="left:1072.7px;top:473.00px;font-size:11px;line-height:12.65px;color:#222;font-weight:400;">J</div>
<div class="t" style="left:1208.2px;top:473.00px;font-size:11px;line-height:12.65px;color:#222;font-weight:400;">0</div>
<div class="t" style="left:1314.7px;top:473.00px;font-size:11px;line-height:12.65px;color:#222;font-weight:400;">2020-01-20</div>
<div class="t" style="left:1411.2px;top:473.00px;font-size:11px;line-height:12.65px;color:#222;font-weight:400;">0</div>
<div class="r" style="left:661px;top:488px;width:70px;height:16.19999999999999px;background:#e9eef8;"></div>
<div class="r" style="left:732.5px;top:488px;width:50.0px;height:16.19999999999999px;background:#fff;"></div>
<div class="r" style="left:784px;top:488px;width:112.5px;height:16.19999999999999px;background:#fff;"></div>
<div class="r" style="left:897.5px;top:488px;width:55.0px;height:16.19999999999999px;background:#fff;"></div>
<div class="r" style="left:953.5px;top:488px;width:115.0px;height:16.19999999999999px;background:#fff;"></div>
<div class="r" style="left:1069.5px;top:488px;width:134.5px;height:16.19999999999999px;background:#fff;"></div>
<div class="r" style="left:1205px;top:488px;width:105.5px;height:16.19999999999999px;background:#fff;"></div>
<div class="r" style="left:1311.5px;top:488px;width:95.5px;height:16.19999999999999px;background:#fff;"></div>
<div class="r" style="left:1408px;top:488px;width:100px;height:16.19999999999999px;background:#fff;"></div>
<div class="t" style="left:661px;top:490px;width:67px;text-align:right;font-size:11px;line-height:12.65px;color:#222">4</div>
<div class="t" style="left:735.7px;top:491.00px;font-size:11px;line-height:12.65px;color:#222;font-weight:400;">1</div>
<div class="t" style="left:787.2px;top:491.00px;font-size:11px;line-height:12.65px;color:#222;font-weight:400;letter-spacing:-0.55px">UK SALES 2019</div>
<div class="t" style="left:900.7px;top:491.00px;font-size:11px;line-height:12.65px;color:#222;font-weight:400;">881</div>
<div class="t" style="left:956.7px;top:491.00px;font-size:11px;line-height:12.65px;color:#222;font-weight:400;">1309</div>
<div class="t" style="left:1072.7px;top:491.00px;font-size:11px;line-height:12.65px;color:#222;font-weight:400;">B</div>
<div class="t" style="left:1208.2px;top:491.00px;font-size:11px;line-height:12.65px;color:#222;font-weight:400;">0</div>
<div class="t" style="left:1314.7px;top:491.00px;font-size:11px;line-height:12.65px;color:#222;font-weight:400;">2020-01-20</div>
<div class="t" style="left:1411.2px;top:491.00px;font-size:11px;line-height:12.65px;color:#222;font-weight:400;">19399667.25</div>
<div class="r" style="left:661px;top:506px;width:70px;height:16.200000000000045px;background:#e9eef8;"></div>
<div class="r" style="left:732.5px;top:506px;width:50.0px;height:16.200000000000045px;background:#fff;"></div>
<div class="r" style="left:784px;top:506px;width:112.5px;height:16.200000000000045px;background:#fff;"></div>
<div class="r" style="left:897.5px;top:506px;width:55.0px;height:16.200000000000045px;background:#fff;"></div>
<div class="r" style="left:953.5px;top:506px;width:115.0px;height:16.200000000000045px;background:#fff;"></div>
<div class="r" style="left:1069.5px;top:506px;width:134.5px;height:16.200000000000045px;background:#fff;"></div>
<div class="r" style="left:1205px;top:506px;width:105.5px;height:16.200000000000045px;background:#fff;"></div>
<div class="r" style="left:1311.5px;top:506px;width:95.5px;height:16.200000000000045px;background:#fff;"></div>
<div class="r" style="left:1408px;top:506px;width:100px;height:16.200000000000045px;background:#fff;"></div>
<div class="t" style="left:661px;top:508px;width:67px;text-align:right;font-size:11px;line-height:12.65px;color:#222">5</div>
<div class="t" style="left:735.7px;top:509.00px;font-size:11px;line-height:12.65px;color:#222;font-weight:400;">1</div>
<div class="t" style="left:787.2px;top:509.00px;font-size:11px;line-height:12.65px;color:#222;font-weight:400;letter-spacing:-0.55px">UK SALES 2019</div>
<div class="t" style="left:900.7px;top:509.00px;font-size:11px;line-height:12.65px;color:#222;font-weight:400;">881</div>
<div class="t" style="left:956.7px;top:509.00px;font-size:11px;line-height:12.65px;color:#222;font-weight:400;">1310</div>
<div class="t" style="left:1072.7px;top:509.00px;font-size:11px;line-height:12.65px;color:#222;font-weight:400;">C</div>
<div class="t" style="left:1208.2px;top:509.00px;font-size:11px;line-height:12.65px;color:#222;font-weight:400;">0</div>
<div class="t" style="left:1314.7px;top:509.00px;font-size:11px;line-height:12.65px;color:#222;font-weight:400;">2020-01-20</div>
<div class="t" style="left:1411.2px;top:509.00px;font-size:11px;line-height:12.65px;color:#222;font-weight:400;">0</div>
<div class="r" style="left:661px;top:524px;width:70px;height:16.200000000000045px;background:#e9eef8;"></div>
<div class="r" style="left:732.5px;top:524px;width:50.0px;height:16.200000000000045px;background:#fff;"></div>
<div class="r" style="left:784px;top:524px;width:112.5px;height:16.200000000000045px;background:#fff;"></div>
<div class="r" style="left:897.5px;top:524px;width:55.0px;height:16.200000000000045px;background:#fff;"></div>
<div class="r" style="left:953.5px;top:524px;width:115.0px;height:16.200000000000045px;background:#fff;"></div>
<div class="r" style="left:1069.5px;top:524px;width:134.5px;height:16.200000000000045px;background:#fff;"></div>
<div class="r" style="left:1205px;top:524px;width:105.5px;height:16.200000000000045px;background:#fff;"></div>
<div class="r" style="left:1311.5px;top:524px;width:95.5px;height:16.200000000000045px;background:#fff;"></div>
<div class="r" style="left:1408px;top:524px;width:100px;height:16.200000000000045px;background:#fff;"></div>
<div class="t" style="left:661px;top:526px;width:67px;text-align:right;font-size:11px;line-height:12.65px;color:#222">6</div>
<div class="t" style="left:735.7px;top:527.00px;font-size:11px;line-height:12.65px;color:#222;font-weight:400;">1</div>
<div class="t" style="left:787.2px;top:527.00px;font-size:11px;line-height:12.65px;color:#222;font-weight:400;letter-spacing:-0.55px">UK SALES 2019</div>
<div class="t" style="left:900.7px;top:527.00px;font-size:11px;line-height:12.65px;color:#222;font-weight:400;">881</div>
<div class="t" style="left:956.7px;top:527.00px;font-size:11px;line-height:12.65px;color:#222;font-weight:400;">1311</div>
<div class="t" style="left:1072.7px;top:527.00px;font-size:11px;line-height:12.65px;color:#222;font-weight:400;">D</div>
<div class="t" style="left:1208.2px;top:527.00px;font-size:11px;line-height:12.65px;color:#222;font-weight:400;">0</div>
<div class="t" style="left:1314.7px;top:527.00px;font-size:11px;line-height:12.65px;color:#222;font-weight:400;">2020-01-20</div>
<div class="t" style="left:1411.2px;top:527.00px;font-size:11px;line-height:12.65px;color:#222;font-weight:400;">0</div>
<div class="r" style="left:661px;top:542px;width:70px;height:16.200000000000045px;background:#e9eef8;"></div>
<div class="r" style="left:732.5px;top:542px;width:50.0px;height:16.200000000000045px;background:#fff;"></div>
<div class="r" style="left:784px;top:542px;width:112.5px;height:16.200000000000045px;background:#fff;"></div>
<div class="r" style="left:897.5px;top:542px;width:55.0px;height:16.200000000000045px;background:#fff;"></div>
<div class="r" style="left:953.5px;top:542px;width:115.0px;height:16.200000000000045px;background:#fff;"></div>
<div class="r" style="left:1069.5px;top:542px;width:134.5px;height:16.200000000000045px;background:#fff;"></div>
<div class="r" style="left:1205px;top:542px;width:105.5px;height:16.200000000000045px;background:#fff;"></div>
<div class="r" style="left:1311.5px;top:542px;width:95.5px;height:16.200000000000045px;background:#fff;"></div>
<div class="r" style="left:1408px;top:542px;width:100px;height:16.200000000000045px;background:#fff;"></div>
<div class="t" style="left:661px;top:544px;width:67px;text-align:right;font-size:11px;line-height:12.65px;color:#222">7</div>
<div class="t" style="left:735.7px;top:545.00px;font-size:11px;line-height:12.65px;color:#222;font-weight:400;">1</div>
<div class="t" style="left:787.2px;top:545.00px;font-size:11px;line-height:12.65px;color:#222;font-weight:400;letter-spacing:-0.55px">UK SALES 2019</div>
<div class="t" style="left:900.7px;top:545.00px;font-size:11px;line-height:12.65px;color:#222;font-weight:400;">881</div>
<div class="t" style="left:956.7px;top:545.00px;font-size:11px;line-height:12.65px;color:#222;font-weight:400;">1312</div>
<div class="t" style="left:1072.7px;top:545.00px;font-size:11px;line-height:12.65px;color:#222;font-weight:400;">A</div>
<div class="t" style="left:1208.2px;top:545.00px;font-size:11px;line-height:12.65px;color:#222;font-weight:400;">0</div>
<div class="t" style="left:1314.7px;top:545.00px;font-size:11px;line-height:12.65px;color:#222;font-weight:400;">2020-01-20</div>
<div class="t" style="left:1411.2px;top:545.00px;font-size:11px;line-height:12.65px;color:#222;font-weight:400;">0</div>
<div class="r" style="left:661px;top:560px;width:70px;height:16.200000000000045px;background:#e9eef8;"></div>
<div class="r" style="left:732.5px;top:560px;width:50.0px;height:16.200000000000045px;background:#fff;"></div>
<div class="r" style="left:784px;top:560px;width:112.5px;height:16.200000000000045px;background:#fff;"></div>
<div class="r" style="left:897.5px;top:560px;width:55.0px;height:16.200000000000045px;background:#fff;"></div>
<div class="r" style="left:953.5px;top:560px;width:115.0px;height:16.200000000000045px;background:#fff;"></div>
<div class="r" style="left:1069.5px;top:560px;width:134.5px;height:16.200000000000045px;background:#fff;"></div>
<div class="r" style="left:1205px;top:560px;width:105.5px;height:16.200000000000045px;background:#fff;"></div>
<div class="r" style="left:1311.5px;top:560px;width:95.5px;height:16.200000000000045px;background:#fff;"></div>
<div class="r" style="left:1408px;top:560px;width:100px;height:16.200000000000045px;background:#fff;"></div>
<div class="t" style="left:661px;top:562px;width:67px;text-align:right;font-size:11px;line-height:12.65px;color:#222">8</div>
<div class="t" style="left:735.7px;top:563.00px;font-size:11px;line-height:12.65px;color:#222;font-weight:400;">1</div>
<div class="t" style="left:787.2px;top:563.00px;font-size:11px;line-height:12.65px;color:#222;font-weight:400;letter-spacing:-0.55px">UK SALES 2019</div>
<div class="t" style="left:900.7px;top:563.00px;font-size:11px;line-height:12.65px;color:#222;font-weight:400;">881</div>
<div class="t" style="left:956.7px;top:563.00px;font-size:11px;line-height:12.65px;color:#222;font-weight:400;">1313</div>
<div class="t" style="left:1072.7px;top:563.00px;font-size:11px;line-height:12.65px;color:#222;font-weight:400;">E</div>
<div class="t" style="left:1208.2px;top:563.00px;font-size:11px;line-height:12.65px;color:#222;font-weight:400;">0</div>
<div class="t" style="left:1314.7px;top:563.00px;font-size:11px;line-height:12.65px;color:#222;font-weight:400;">2020-01-20</div>
<div class="t" style="left:1411.2px;top:563.00px;font-size:11px;line-height:12.65px;color:#222;font-weight:400;">19399667.25</div>
<div class="r" style="left:661px;top:578px;width:70px;height:16.200000000000045px;background:#e9eef8;"></div>
<div class="r" style="left:732.5px;top:578px;width:50.0px;height:16.200000000000045px;background:#fff;"></div>
<div class="r" style="left:784px;top:578px;width:112.5px;height:16.200000000000045px;background:#fff;"></div>
<div class="r" style="left:897.5px;top:578px;width:55.0px;height:16.200000000000045px;background:#fff;"></div>
<div class="r" style="left:953.5px;top:578px;width:115.0px;height:16.200000000000045px;background:#fff;"></div>
<div class="r" style="left:1069.5px;top:578px;width:134.5px;height:16.200000000000045px;background:#fff;"></div>
<div class="r" style="left:1205px;top:578px;width:105.5px;height:16.200000000000045px;background:#fff;"></div>
<div class="r" style="left:1311.5px;top:578px;width:95.5px;height:16.200000000000045px;background:#fff;"></div>
<div class="r" style="left:1408px;top:578px;width:100px;height:16.200000000000045px;background:#fff;"></div>
<div class="t" style="left:661px;top:580px;width:67px;text-align:right;font-size:11px;line-height:12.65px;color:#222">9</div>
<div class="t" style="left:735.7px;top:581.00px;font-size:11px;line-height:12.65px;color:#222;font-weight:400;">1</div>
<div class="t" style="left:787.2px;top:581.00px;font-size:11px;line-height:12.65px;color:#222;font-weight:400;letter-spacing:-0.55px">UK SALES 2019</div>
<div class="t" style="left:900.7px;top:581.00px;font-size:11px;line-height:12.65px;color:#222;font-weight:400;">881</div>
<div class="t" style="left:956.7px;top:581.00px;font-size:11px;line-height:12.65px;color:#222;font-weight:400;">1381</div>
<div class="t" style="left:1072.7px;top:581.00px;font-size:11px;line-height:12.65px;color:#222;font-weight:400;">O</div>
<div class="t" style="left:1208.2px;top:581.00px;font-size:11px;line-height:12.65px;color:#222;font-weight:400;">0</div>
<div class="t" style="left:1314.7px;top:581.00px;font-size:11px;line-height:12.65px;color:#222;font-weight:400;">2020-01-20</div>
<div class="t" style="left:1411.2px;top:581.00px;font-size:11px;line-height:12.65px;color:#222;font-weight:400;">86450.5</div>
<div class="r" style="left:661px;top:596px;width:70px;height:16.200000000000045px;background:#e9eef8;"></div>
<div class="r" style="left:732.5px;top:596px;width:50.0px;height:16.200000000000045px;background:#fff;"></div>
<div class="r" style="left:784px;top:596px;width:112.5px;height:16.200000000000045px;background:#fff;"></div>
<div class="r" style="left:897.5px;top:596px;width:55.0px;height:16.200000000000045px;background:#fff;"></div>
<div class="r" style="left:953.5px;top:596px;width:115.0px;height:16.200000000000045px;background:#fff;"></div>
<div class="r" style="left:1069.5px;top:596px;width:134.5px;height:16.200000000000045px;background:#fff;"></div>
<div class="r" style="left:1205px;top:596px;width:105.5px;height:16.200000000000045px;background:#fff;"></div>
<div class="r" style="left:1311.5px;top:596px;width:95.5px;height:16.200000000000045px;background:#fff;"></div>
<div class="r" style="left:1408px;top:596px;width:100px;height:16.200000000000045px;background:#fff;"></div>
<div class="t" style="left:661px;top:598px;width:67px;text-align:right;font-size:11px;line-height:12.65px;color:#222">10</div>
<div class="t" style="left:735.7px;top:599.00px;font-size:11px;line-height:12.65px;color:#222;font-weight:400;">1</div>
<div class="t" style="left:787.2px;top:599.00px;font-size:11px;line-height:12.65px;color:#222;font-weight:400;letter-spacing:-0.55px">UK SALES 2019</div>
<div class="t" style="left:900.7px;top:599.00px;font-size:11px;line-height:12.65px;color:#222;font-weight:400;">881</div>
<div class="t" style="left:956.7px;top:599.00px;font-size:11px;line-height:12.65px;color:#222;font-weight:400;">1383</div>
<div class="t" style="left:1072.7px;top:599.00px;font-size:11px;line-height:12.65px;color:#222;font-weight:400;">P</div>
<div class="t" style="left:1208.2px;top:599.00px;font-size:11px;line-height:12.65px;color:#222;font-weight:400;">0</div>
<div class="t" style="left:1314.7px;top:599.00px;font-size:11px;line-height:12.65px;color:#222;font-weight:400;">2020-01-20</div>
<div class="t" style="left:1411.2px;top:599.00px;font-size:11px;line-height:12.65px;color:#222;font-weight:400;">120241.36</div>
<div class="r" style="left:661px;top:614px;width:70px;height:16.200000000000045px;background:#e9eef8;"></div>
<div class="r" style="left:732.5px;top:614px;width:50.0px;height:16.200000000000045px;background:#fff;"></div>
<div class="r" style="left:784px;top:614px;width:112.5px;height:16.200000000000045px;background:#fff;"></div>
<div class="r" style="left:897.5px;top:614px;width:55.0px;height:16.200000000000045px;background:#fff;"></div>
<div class="r" style="left:953.5px;top:614px;width:115.0px;height:16.200000000000045px;background:#fff;"></div>
<div class="r" style="left:1069.5px;top:614px;width:134.5px;height:16.200000000000045px;background:#fff;"></div>
<div class="r" style="left:1205px;top:614px;width:105.5px;height:16.200000000000045px;background:#fff;"></div>
<div class="r" style="left:1311.5px;top:614px;width:95.5px;height:16.200000000000045px;background:#fff;"></div>
<div class="r" style="left:1408px;top:614px;width:100px;height:16.200000000000045px;background:#fff;"></div>
<div class="t" style="left:661px;top:616px;width:67px;text-align:right;font-size:11px;line-height:12.65px;color:#222">11</div>
<div class="t" style="left:735.7px;top:617.00px;font-size:11px;line-height:12.65px;color:#222;font-weight:400;">1</div>
<div class="t" style="left:787.2px;top:617.00px;font-size:11px;line-height:12.65px;color:#222;font-weight:400;letter-spacing:-0.55px">UK SALES 2019</div>
<div class="t" style="left:900.7px;top:617.00px;font-size:11px;line-height:12.65px;color:#222;font-weight:400;">881</div>
<div class="t" style="left:956.7px;top:617.00px;font-size:11px;line-height:12.65px;color:#222;font-weight:400;">1389</div>
<div class="t" style="left:1072.7px;top:617.00px;font-size:11px;line-height:12.65px;color:#222;font-weight:400;">H</div>
<div class="t" style="left:1208.2px;top:617.00px;font-size:11px;line-height:12.65px;color:#222;font-weight:400;">0</div>
<div class="t" style="left:1314.7px;top:617.00px;font-size:11px;line-height:12.65px;color:#222;font-weight:400;">2020-01-20</div>
<div class="t" style="left:1411.2px;top:617.00px;font-size:11px;line-height:12.65px;color:#222;font-weight:400;">0</div>
<div class="r" style="left:661px;top:632px;width:70px;height:16.200000000000045px;background:#e9eef8;"></div>
<div class="r" style="left:732.5px;top:632px;width:50.0px;height:16.200000000000045px;background:#fff;"></div>
<div class="r" style="left:784px;top:632px;width:112.5px;height:16.200000000000045px;background:#fff;"></div>
<div class="r" style="left:897.5px;top:632px;width:55.0px;height:16.200000000000045px;background:#fff;"></div>
<div class="r" style="left:953.5px;top:632px;width:115.0px;height:16.200000000000045px;background:#fff;"></div>
<div class="r" style="left:1069.5px;top:632px;width:134.5px;height:16.200000000000045px;background:#fff;"></div>
<div class="r" style="left:1205px;top:632px;width:105.5px;height:16.200000000000045px;background:#fff;"></div>
<div class="r" style="left:1311.5px;top:632px;width:95.5px;height:16.200000000000045px;background:#fff;"></div>
<div class="r" style="left:1408px;top:632px;width:100px;height:16.200000000000045px;background:#fff;"></div>
<div class="t" style="left:661px;top:634px;width:67px;text-align:right;font-size:11px;line-height:12.65px;color:#222">12</div>
<div class="t" style="left:735.7px;top:635.00px;font-size:11px;line-height:12.65px;color:#222;font-weight:400;">1</div>
<div class="t" style="left:787.2px;top:635.00px;font-size:11px;line-height:12.65px;color:#222;font-weight:400;letter-spacing:-0.55px">UK SALES 2019</div>
<div class="t" style="left:900.7px;top:635.00px;font-size:11px;line-height:12.65px;color:#222;font-weight:400;">881</div>
<div class="t" style="left:956.7px;top:635.00px;font-size:11px;line-height:12.65px;color:#222;font-weight:400;">266</div>
<div class="t" style="left:1072.7px;top:635.00px;font-size:11px;line-height:12.65px;color:#222;font-weight:400;">F</div>
<div class="t" style="left:1208.2px;top:635.00px;font-size:11px;line-height:12.65px;color:#222;font-weight:400;">0</div>
<div class="t" style="left:1314.7px;top:635.00px;font-size:11px;line-height:12.65px;color:#222;font-weight:400;">2020-01-20</div>
<div class="t" style="left:1411.2px;top:635.00px;font-size:11px;line-height:12.65px;color:#222;font-weight:400;">0</div>
<div class="r" style="left:661px;top:650px;width:70px;height:16.200000000000045px;background:#e9eef8;"></div>
<div class="r" style="left:732.5px;top:650px;width:50.0px;height:16.200000000000045px;background:#fff;"></div>
<div class="r" style="left:784px;top:650px;width:112.5px;height:16.200000000000045px;background:#fff;"></div>
<div class="r" style="left:897.5px;top:650px;width:55.0px;height:16.200000000000045px;background:#fff;"></div>
<div class="r" style="left:953.5px;top:650px;width:115.0px;height:16.200000000000045px;background:#fff;"></div>
<div class="r" style="left:1069.5px;top:650px;width:134.5px;height:16.200000000000045px;background:#fff;"></div>
<div class="r" style="left:1205px;top:650px;width:105.5px;height:16.200000000000045px;background:#fff;"></div>
<div class="r" style="left:1311.5px;top:650px;width:95.5px;height:16.200000000000045px;background:#fff;"></div>
<div class="r" style="left:1408px;top:650px;width:100px;height:16.200000000000045px;background:#fff;"></div>
<div class="t" style="left:661px;top:652px;width:67px;text-align:right;font-size:11px;line-height:12.65px;color:#222">13</div>
<div class="t" style="left:735.7px;top:653.00px;font-size:11px;line-height:12.65px;color:#222;font-weight:400;">1</div>
<div class="t" style="left:787.2px;top:653.00px;font-size:11px;line-height:12.65px;color:#222;font-weight:400;letter-spacing:-0.55px">UK SALES 2019</div>
<div class="t" style="left:900.7px;top:653.00px;font-size:11px;line-height:12.65px;color:#222;font-weight:400;">881</div>
<div class="t" style="left:956.7px;top:653.00px;font-size:11px;line-height:12.65px;color:#222;font-weight:400;">454</div>
<div class="t" style="left:1072.7px;top:653.00px;font-size:11px;line-height:12.65px;color:#222;font-weight:400;">N</div>
<div class="t" style="left:1208.2px;top:653.00px;font-size:11px;line-height:12.65px;color:#222;font-weight:400;">0</div>
<div class="t" style="left:1314.7px;top:653.00px;font-size:11px;line-height:12.65px;color:#222;font-weight:400;">2020-01-20</div>
<div class="t" style="left:1411.2px;top:653.00px;font-size:11px;line-height:12.65px;color:#222;font-weight:400;">0</div>
<div class="r" style="left:661px;top:668px;width:70px;height:16.200000000000045px;background:#e9eef8;"></div>
<div class="r" style="left:732.5px;top:668px;width:50.0px;height:16.200000000000045px;background:#fff;"></div>
<div class="r" style="left:784px;top:668px;width:112.5px;height:16.200000000000045px;background:#fff;"></div>
<div class="r" style="left:897.5px;top:668px;width:55.0px;height:16.200000000000045px;background:#fff;"></div>
<div class="r" style="left:953.5px;top:668px;width:115.0px;height:16.200000000000045px;background:#fff;"></div>
<div class="r" style="left:1069.5px;top:668px;width:134.5px;height:16.200000000000045px;background:#fff;"></div>
<div class="r" style="left:1205px;top:668px;width:105.5px;height:16.200000000000045px;background:#fff;"></div>
<div class="r" style="left:1311.5px;top:668px;width:95.5px;height:16.200000000000045px;background:#fff;"></div>
<div class="r" style="left:1408px;top:668px;width:100px;height:16.200000000000045px;background:#fff;"></div>
<div class="t" style="left:661px;top:670px;width:67px;text-align:right;font-size:11px;line-height:12.65px;color:#222">14</div>
<div class="t" style="left:735.7px;top:671.00px;font-size:11px;line-height:12.65px;color:#222;font-weight:400;">1</div>
<div class="t" style="left:787.2px;top:671.00px;font-size:11px;line-height:12.65px;color:#222;font-weight:400;letter-spacing:-0.55px">UK SALES 2019</div>
<div class="t" style="left:900.7px;top:671.00px;font-size:11px;line-height:12.65px;color:#222;font-weight:400;">881</div>
<div class="t" style="left:956.7px;top:671.00px;font-size:11px;line-height:12.65px;color:#222;font-weight:400;">459</div>
<div class="t" style="left:1072.7px;top:671.00px;font-size:11px;line-height:12.65px;color:#222;font-weight:400;">M</div>
<div class="t" style="left:1208.2px;top:671.00px;font-size:11px;line-height:12.65px;color:#222;font-weight:400;">0</div>
<div class="t" style="left:1314.7px;top:671.00px;font-size:11px;line-height:12.65px;color:#222;font-weight:400;">2020-01-20</div>
<div class="t" style="left:1411.2px;top:671.00px;font-size:11px;line-height:12.65px;color:#222;font-weight:400;">0</div>
<div class="r" style="left:661px;top:686px;width:70px;height:16.200000000000045px;background:#e9eef8;"></div>
<div class="r" style="left:732.5px;top:686px;width:50.0px;height:16.200000000000045px;background:#fff;"></div>
<div class="r" style="left:784px;top:686px;width:112.5px;height:16.200000000000045px;background:#fff;"></div>
<div class="r" style="left:897.5px;top:686px;width:55.0px;height:16.200000000000045px;background:#fff;"></div>
<div class="r" style="left:953.5px;top:686px;width:115.0px;height:16.200000000000045px;background:#fff;"></div>
<div class="r" style="left:1069.5px;top:686px;width:134.5px;height:16.200000000000045px;background:#fff;"></div>
<div class="r" style="left:1205px;top:686px;width:105.5px;height:16.200000000000045px;background:#fff;"></div>
<div class="r" style="left:1311.5px;top:686px;width:95.5px;height:16.200000000000045px;background:#fff;"></div>
<div class="r" style="left:1408px;top:686px;width:100px;height:16.200000000000045px;background:#fff;"></div>
<div class="t" style="left:661px;top:688px;width:67px;text-align:right;font-size:11px;line-height:12.65px;color:#222">15</div>
<div class="t" style="left:735.7px;top:689.00px;font-size:11px;line-height:12.65px;color:#222;font-weight:400;">1</div>
<div class="t" style="left:787.2px;top:689.00px;font-size:11px;line-height:12.65px;color:#222;font-weight:400;letter-spacing:-0.55px">UK SALES 2019</div>
<div class="t" style="left:900.7px;top:689.00px;font-size:11px;line-height:12.65px;color:#222;font-weight:400;">881</div>
<div class="t" style="left:956.7px;top:689.00px;font-size:11px;line-height:12.65px;color:#222;font-weight:400;">517</div>
<div class="t" style="left:1072.7px;top:689.00px;font-size:11px;line-height:12.65px;color:#222;font-weight:400;">R</div>
<div class="t" style="left:1208.2px;top:689.00px;font-size:11px;line-height:12.65px;color:#222;font-weight:400;">0</div>
<div class="t" style="left:1314.7px;top:689.00px;font-size:11px;line-height:12.65px;color:#222;font-weight:400;">2020-01-20</div>
<div class="t" style="left:1411.2px;top:689.00px;font-size:11px;line-height:12.65px;color:#222;font-weight:400;">20</div>
<div class="r" style="left:661px;top:704px;width:70px;height:16.200000000000045px;background:#e9eef8;"></div>
<div class="r" style="left:732.5px;top:704px;width:50.0px;height:16.200000000000045px;background:#fff;"></div>
<div class="r" style="left:784px;top:704px;width:112.5px;height:16.200000000000045px;background:#fff;"></div>
<div class="r" style="left:897.5px;top:704px;width:55.0px;height:16.200000000000045px;background:#fff;"></div>
<div class="r" style="left:953.5px;top:704px;width:115.0px;height:16.200000000000045px;background:#fff;"></div>
<div class="r" style="left:1069.5px;top:704px;width:134.5px;height:16.200000000000045px;background:#fff;"></div>
<div class="r" style="left:1205px;top:704px;width:105.5px;height:16.200000000000045px;background:#fff;"></div>
<div class="r" style="left:1311.5px;top:704px;width:95.5px;height:16.200000000000045px;background:#fff;"></div>
<div class="r" style="left:1408px;top:704px;width:100px;height:16.200000000000045px;background:#fff;"></div>
<div class="t" style="left:661px;top:706px;width:67px;text-align:right;font-size:11px;line-height:12.65px;color:#222">16</div>
<div class="t" style="left:735.7px;top:707.00px;font-size:11px;line-height:12.65px;color:#222;font-weight:400;">1</div>
<div class="t" style="left:787.2px;top:707.00px;font-size:11px;line-height:12.65px;color:#222;font-weight:400;letter-spacing:-0.55px">UK SALES 2019</div>
<div class="t" style="left:900.7px;top:707.00px;font-size:11px;line-height:12.65px;color:#222;font-weight:400;">881</div>
<div class="t" style="left:956.7px;top:707.00px;font-size:11px;line-height:12.65px;color:#222;font-weight:400;">518</div>
<div class="t" style="left:1072.7px;top:707.00px;font-size:11px;line-height:12.65px;color:#222;font-weight:400;">Q</div>
<div class="t" style="left:1208.2px;top:707.00px;font-size:11px;line-height:12.65px;color:#222;font-weight:400;">0</div>
<div class="t" style="left:1314.7px;top:707.00px;font-size:11px;line-height:12.65px;color:#222;font-weight:400;">2020-01-20</div>
<div class="t" style="left:1411.2px;top:707.00px;font-size:11px;line-height:12.65px;color:#222;font-weight:400;">10</div>
<div class="r" style="left:661px;top:722px;width:70px;height:16.200000000000045px;background:#e9eef8;"></div>
<div class="r" style="left:732.5px;top:722px;width:50.0px;height:16.200000000000045px;background:#fff;"></div>
<div class="r" style="left:784px;top:722px;width:112.5px;height:16.200000000000045px;background:#fff;"></div>
<div class="r" style="left:897.5px;top:722px;width:55.0px;height:16.200000000000045px;background:#fff;"></div>
<div class="r" style="left:953.5px;top:722px;width:115.0px;height:16.200000000000045px;background:#fff;"></div>
<div class="r" style="left:1069.5px;top:722px;width:134.5px;height:16.200000000000045px;background:#fff;"></div>
<div class="r" style="left:1205px;top:722px;width:105.5px;height:16.200000000000045px;background:#fff;"></div>
<div class="r" style="left:1311.5px;top:722px;width:95.5px;height:16.200000000000045px;background:#fff;"></div>
<div class="r" style="left:1408px;top:722px;width:100px;height:16.200000000000045px;background:#fff;"></div>
<div class="t" style="left:661px;top:724px;width:67px;text-align:right;font-size:11px;line-height:12.65px;color:#222">17</div>
<div class="t" style="left:735.7px;top:725.00px;font-size:11px;line-height:12.65px;color:#222;font-weight:400;">1</div>
<div class="t" style="left:787.2px;top:725.00px;font-size:11px;line-height:12.65px;color:#222;font-weight:400;letter-spacing:-0.55px">UK SALES 2019</div>
<div class="t" style="left:900.7px;top:725.00px;font-size:11px;line-height:12.65px;color:#222;font-weight:400;">881</div>
<div class="t" style="left:956.7px;top:725.00px;font-size:11px;line-height:12.65px;color:#222;font-weight:400;">638</div>
<div class="t" style="left:1072.7px;top:725.00px;font-size:11px;line-height:12.65px;color:#222;font-weight:400;">L</div>
<div class="t" style="left:1208.2px;top:725.00px;font-size:11px;line-height:12.65px;color:#222;font-weight:400;">0</div>
<div class="t" style="left:1314.7px;top:725.00px;font-size:11px;line-height:12.65px;color:#222;font-weight:400;">2020-01-20</div>
<div class="t" style="left:1411.2px;top:725.00px;font-size:11px;line-height:12.65px;color:#222;font-weight:400;">0</div>
<div class="r" style="left:661px;top:740px;width:70px;height:16.200000000000045px;background:#e9eef8;"></div>
<div class="r" style="left:732.5px;top:740px;width:50.0px;height:16.200000000000045px;background:#fff;"></div>
<div class="r" style="left:784px;top:740px;width:112.5px;height:16.200000000000045px;background:#fff;"></div>
<div class="r" style="left:897.5px;top:740px;width:55.0px;height:16.200000000000045px;background:#fff;"></div>
<div class="r" style="left:953.5px;top:740px;width:115.0px;height:16.200000000000045px;background:#fff;"></div>
<div class="r" style="left:1069.5px;top:740px;width:134.5px;height:16.200000000000045px;background:#fff;"></div>
<div class="r" style="left:1205px;top:740px;width:105.5px;height:16.200000000000045px;background:#fff;"></div>
<div class="r" style="left:1311.5px;top:740px;width:95.5px;height:16.200000000000045px;background:#fff;"></div>
<div class="r" style="left:1408px;top:740px;width:100px;height:16.200000000000045px;background:#fff;"></div>
<div class="t" style="left:661px;top:742px;width:67px;text-align:right;font-size:11px;line-height:12.65px;color:#222">18</div>
<div class="t" style="left:735.7px;top:743.00px;font-size:11px;line-height:12.65px;color:#222;font-weight:400;">1</div>
<div class="t" style="left:787.2px;top:743.00px;font-size:11px;line-height:12.65px;color:#222;font-weight:400;letter-spacing:-0.55px">UK SALES 2019</div>
<div class="t" style="left:900.7px;top:743.00px;font-size:11px;line-height:12.65px;color:#222;font-weight:400;">881</div>
<div class="t" style="left:956.7px;top:743.00px;font-size:11px;line-height:12.65px;color:#222;font-weight:400;">70</div>
<div class="t" style="left:1072.7px;top:743.00px;font-size:11px;line-height:12.65px;color:#222;font-weight:400;">G</div>
<div class="t" style="left:1208.2px;top:743.00px;font-size:11px;line-height:12.65px;color:#222;font-weight:400;">0</div>
<div class="t" style="left:1314.7px;top:743.00px;font-size:11px;line-height:12.65px;color:#222;font-weight:400;">2020-01-20</div>
<div class="t" style="left:1411.2px;top:743.00px;font-size:11px;line-height:12.65px;color:#222;font-weight:400;">0</div>
<div class="r" style="left:661px;top:758px;width:851px;height:2px;background:#ffffff;"></div>
</body></html>
